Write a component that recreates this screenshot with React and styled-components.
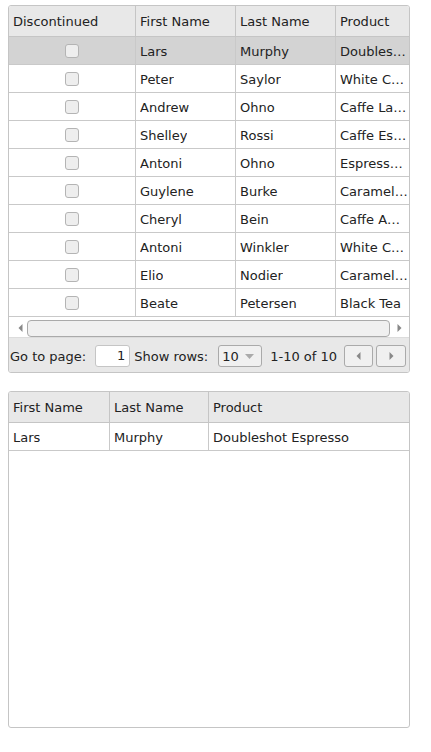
import React from 'react';
import styled, { createGlobalStyle } from 'styled-components';

const GlobalStyle = createGlobalStyle`
  body {
    margin: 0;
    background: #fff;
    font-family: "DejaVu Sans", Verdana, sans-serif;
    font-size: 13px;
    color: #222;
  }
  * { box-sizing: border-box; }
`;

const Page = styled.div`
  display: flex;
  flex-direction: column;
  gap: 18px;
  padding: 5px 0 0 8px;
`;

const Grid = styled.div`
  width: 402px;
  height: ${p => p.h}px;
  border: 1px solid #c5c5c5;
  border-radius: 3px;
  overflow: hidden;
  background: #fff;
  display: flex;
  flex-direction: column;
`;

const HeaderRow = styled.div`
  display: grid;
  grid-template-columns: ${p => p.cols};
  height: 31px;
  background: #e8e8e8;
  border-bottom: 1px solid #c5c5c5;
`;

const HeaderCell = styled.div`
  display: flex;
  align-items: center;
  padding-left: 4px;
  border-right: ${p => (p.last ? 'none' : '1px solid #c5c5c5')};
  white-space: nowrap;
  overflow: hidden;
`;

const Row = styled.div`
  display: grid;
  grid-template-columns: ${p => p.cols};
  height: 28px;
  background: ${p => (p.selected ? '#d3d3d3' : '#fff')};
  border-bottom: 1px solid #c9c9c9;
`;

const Cell = styled.div`
  display: flex;
  align-items: center;
  justify-content: ${p => (p.center ? 'center' : 'flex-start')};
  padding: 1px 0 0 4px;
  border-right: ${p => (p.last ? 'none' : '1px solid #c9c9c9')};
  min-width: 0;
`;

const CellText = styled.span`
  white-space: nowrap;
  overflow: hidden;
  text-overflow: ellipsis;
  min-width: 0;
`;

const Check = styled.span`
  width: 14px;
  height: 14px;
  margin-left: -4px;
  border: 1px solid #b4b4b4;
  border-radius: 3px;
  background: #eeeeee;
`;

const ScrollBar = styled.div`
  display: flex;
  align-items: center;
  height: 20px;
  padding: 2px 0 0 4px;
`;

const ArrowBox = styled.span`
  width: ${p => p.w}px;
  display: flex;
  align-items: center;
  justify-content: center;
`;

const Thumb = styled.div`
  flex: 1;
  height: 17px;
  border: 1px solid #aaaaaa;
  border-radius: 4px;
  background: #f0f0f0;
`;

const Pager = styled.div`
  display: flex;
  align-items: center;
  height: 35px;
  background: #e8e8e8;
  border-top: 1px solid #dcdcdc;
  padding-left: 1px;
  padding-top: 2px;
  white-space: nowrap;
`;

const Label = styled.span`
  margin-left: ${p => p.ml || 0}px;
`;

const PageInput = styled.div`
  width: 35px;
  height: 22px;
  margin-left: 9px;
  background: #fff;
  border: 1px solid #c5c5c5;
  border-radius: 3px;
  text-align: right;
  padding-right: 4px;
  line-height: 20px;
`;

const Dropdown = styled.div`
  width: 44px;
  height: 22px;
  margin-left: 10px;
  display: flex;
  align-items: center;
  justify-content: space-between;
  padding: 0 7px 0 3px;
  background: #f0f0f0;
  border: 1px solid #aaaaaa;
  border-radius: 3px;
`;

const PagerButton = styled.div`
  width: ${p => p.w}px;
  height: 22px;
  margin-left: ${p => p.ml}px;
  display: flex;
  align-items: center;
  justify-content: center;
  background: #f0f0f0;
  border: 1px solid #aaaaaa;
  border-radius: 3px;
`;

const Left = () => (
  <svg width="5" height="8" viewBox="0 0 5 8"><path d="M4.5 0 L0.5 4 L4.5 8 Z" fill="#888" /></svg>
);
const Right = () => (
  <svg width="5" height="8" viewBox="0 0 5 8"><path d="M0.5 0 L4.5 4 L0.5 8 Z" fill="#888" /></svg>
);
const Down = () => (
  <svg width="9" height="5" viewBox="0 0 9 5"><path d="M0 0 L9 0 L4.5 5 Z" fill="#aaa" /></svg>
);

const people = [
  ['Lars', 'Murphy', 'Doubleshot Espresso'],
  ['Peter', 'Saylor', 'White Chocolate Mocha'],
  ['Andrew', 'Ohno', 'Caffe Latte'],
  ['Shelley', 'Rossi', 'Caffe Espresso'],
  ['Antoni', 'Ohno', 'Espresso Truffle'],
  ['Guylene', 'Burke', 'Caramel Latte'],
  ['Cheryl', 'Bein', 'Caffe Americano'],
  ['Antoni', 'Winkler', 'White Chocolate Mocha'],
  ['Elio', 'Nodier', 'Caramel Latte'],
  ['Beate', 'Petersen', 'Black Tea'],
];

const mainCols = '127px 100px 100px 73px';
const subCols = '101px 99px 200px';

const App = () => {
  return (
    <Page>
      <GlobalStyle />
      <Grid h={368}>
        <HeaderRow cols={mainCols}>
          <HeaderCell>Discontinued</HeaderCell>
          <HeaderCell>First Name</HeaderCell>
          <HeaderCell>Last Name</HeaderCell>
          <HeaderCell last>Product</HeaderCell>
        </HeaderRow>
        {people.map((p, i) => (
          <Row key={i} cols={mainCols} selected={i === 0}>
            <Cell center><Check /></Cell>
            <Cell><CellText>{p[0]}</CellText></Cell>
            <Cell><CellText>{p[1]}</CellText></Cell>
            <Cell last><CellText>{p[2]}</CellText></Cell>
          </Row>
        ))}
        <ScrollBar>
          <ArrowBox w={14}><Left /></ArrowBox>
          <Thumb />
          <ArrowBox w={19}><Right /></ArrowBox>
        </ScrollBar>
        <Pager>
          <Label>Go to page:</Label>
          <PageInput>1</PageInput>
          <Label ml={4}>Show rows:</Label>
          <Dropdown>
            <span>10</span>
            <Down />
          </Dropdown>
          <Label ml={8}>1-10 of 10</Label>
          <PagerButton w={29} ml={7}><Left /></PagerButton>
          <PagerButton w={30} ml={3}><Right /></PagerButton>
        </Pager>
      </Grid>
      <Grid h={337}>
        <HeaderRow cols={subCols}>
          <HeaderCell>First Name</HeaderCell>
          <HeaderCell>Last Name</HeaderCell>
          <HeaderCell last>Product</HeaderCell>
        </HeaderRow>
        <Row cols={subCols}>
          <Cell><CellText>Lars</CellText></Cell>
          <Cell><CellText>Murphy</CellText></Cell>
          <Cell last><CellText>Doubleshot Espresso</CellText></Cell>
        </Row>
      </Grid>
    </Page>
  );
};

export default App;
